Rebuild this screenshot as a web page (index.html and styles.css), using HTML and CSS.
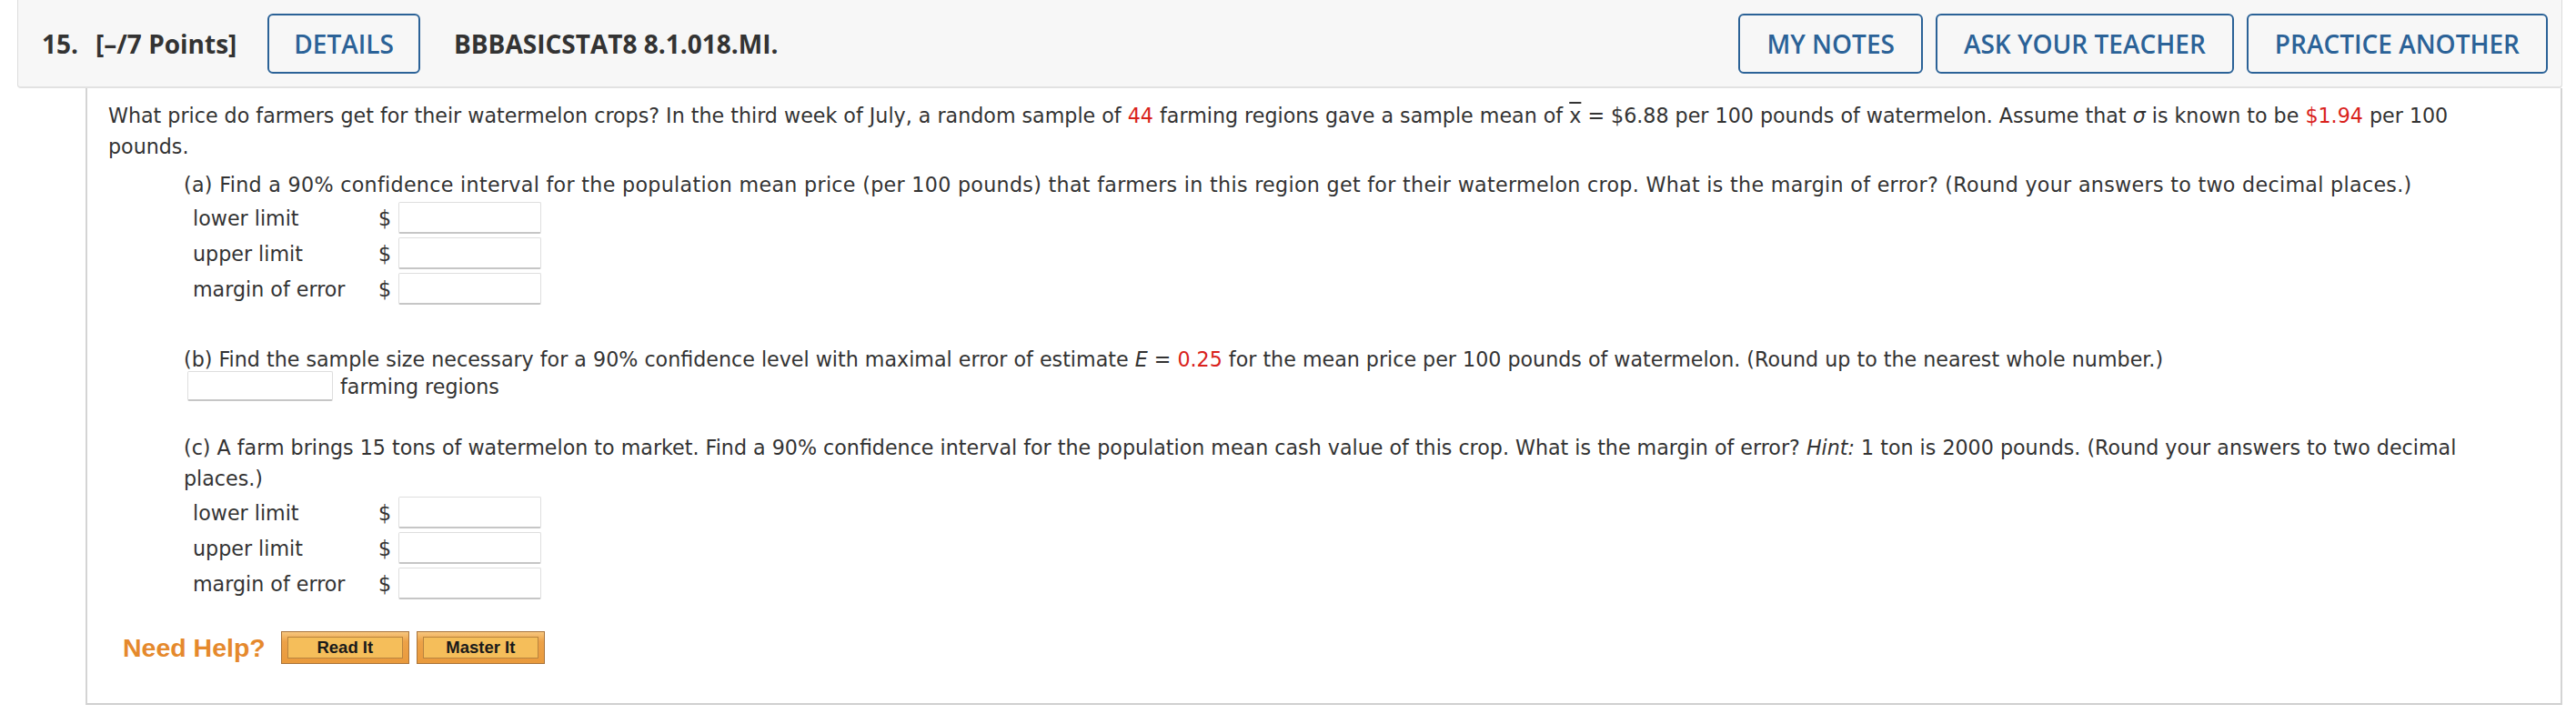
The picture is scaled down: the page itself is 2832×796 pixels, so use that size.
FILE: index.html
```html
<!DOCTYPE html>
<html lang="en">
<head>
<meta charset="utf-8">
<title>Question 15</title>
<link rel="stylesheet" href="styles.css">
</head>
<body>
<div class="question">
  <div class="qhead">
    <span class="qnum">15.</span><span class="qpts">[–/7 Points]</span>
    <span class="hbtn details">DETAILS</span>
    <span class="qid">BBBASICSTAT8 8.1.018.MI.</span>
    <div class="hactions">
      <span class="hbtn">MY NOTES</span>
      <span class="hbtn">ASK YOUR TEACHER</span>
      <span class="hbtn">PRACTICE ANOTHER</span>
    </div>
  </div>
  <div class="qbody">
    <p class="stem"><span>What price do farmers get for their watermelon crops? In the third week of July, a random sample of </span><span class="red">44</span><span> farming regions gave a sample mean of </span><span class="xbar">x</span><span> = $6.88 per 100 pounds of watermelon. Assume that </span><i>σ</i><span> is known to be </span><span class="red">$1.94</span><span> per 100 </span><span>pounds.</span></p>

    <div class="part part-a">
      <p class="qa">(a) Find a 90% confidence interval for the population mean price (per 100 pounds) that farmers in this region get for their watermelon crop. What is the margin of error? (Round your answers to two decimal places.)</p>
      <div class="answers">
        <span class="lbl">lower limit</span><span class="cur">$</span><span class="inp"></span>
        <span class="lbl">upper limit</span><span class="cur">$</span><span class="inp"></span>
        <span class="lbl">margin of error</span><span class="cur">$</span><span class="inp"></span>
      </div>
    </div>

    <div class="part part-b">
      <p><span>(b) Find the sample size necessary for a 90% confidence level with maximal error of estimate </span><i>E</i><span> = </span><span class="red">0.25</span><span> for the mean price per 100 pounds of watermelon. (Round up to the nearest whole number.)</span></p>
      <div class="inline-answer">
        <span class="inp inp-b"></span><span>farming regions</span>
      </div>
    </div>

    <div class="part part-c">
      <p><span>(c) A farm brings 15 tons of watermelon to market. Find a 90% confidence interval for the population mean cash value of this crop. What is the margin of error? </span><i>Hint:</i><span> 1 ton is 2000 pounds. (Round your answers to two decimal </span><span>places.)</span></p>
      <div class="answers">
        <span class="lbl">lower limit</span><span class="cur">$</span><span class="inp"></span>
        <span class="lbl">upper limit</span><span class="cur">$</span><span class="inp"></span>
        <span class="lbl">margin of error</span><span class="cur">$</span><span class="inp"></span>
      </div>
    </div>

    <div class="help">
      <span class="help-label">Need Help?</span>
      <span class="help-btn"><span class="help-inner">Read It</span></span>
      <span class="help-btn"><span class="help-inner">Master It</span></span>
    </div>
  </div>
</div>
</body>
</html>
```

FILE: styles.css
```css
html, body {
  margin: 0;
  padding: 0;
  background: #ffffff;
}

.question {
  margin-left: 19px;
  width: 2798px;
}

.qhead {
  display: flex;
  align-items: center;
  box-sizing: border-box;
  height: 97px;
  padding: 0 15px 0 26px;
  background: #f7f7f7;
  border-left: 1px solid #dcdcdc;
  border-right: 1px solid #dcdcdc;
  border-bottom: 2px solid #e2e2e2;
  border-radius: 0 0 4px 4px;
  font-family: "Open Sans", "Liberation Sans", sans-serif;
  font-size: 28px;
  color: #333333;
}

.qnum {
  font-weight: 700;
  margin-right: 19px;
}

.qpts {
  font-weight: 700;
  margin-right: 34px;
}

.qid {
  font-weight: 700;
  margin-left: 37px;
}

.hbtn {
  display: inline-flex;
  align-items: center;
  justify-content: center;
  box-sizing: border-box;
  height: 66px;
  padding: 0 29px;
  border: 2px solid #2b6297;
  border-radius: 6px;
  color: #2b6297;
  font-weight: 600;
  font-size: 28px;
  white-space: nowrap;
}

.hbtn.details {
  padding: 0 27px;
}

.hactions {
  display: flex;
  gap: 14px;
  margin-left: auto;
}

.qbody {
  margin-left: 75px;
  box-sizing: border-box;
  padding: 13px 52px 43px 23px;
  border-left: 2px solid #d4d4d4;
  border-right: 2px solid #d4d4d4;
  border-bottom: 2px solid #d0d0d0;
  font-family: "DejaVu Sans", Verdana, sans-serif;
  font-size: 22.2px;
  line-height: 34px;
  color: #333333;
}

.qbody p {
  margin: 0;
}

.qbody .qa {
  letter-spacing: 0.31px;
}

.red {
  color: #d9221c;
}

.xbar {
  text-decoration: overline;
}

.part {
  margin-left: 83px;
}

.part-a {
  margin-top: 8px;
}

.part-b {
  margin-top: 41px;
}

.part-c {
  margin-top: 33px;
}

.answers {
  display: grid;
  grid-template-columns: 204px 22px 157px;
  grid-auto-rows: 39px;
  align-items: center;
  margin-left: 10px;
}

.part-c .answers {
  margin-top: 1px;
}

.inp {
  display: block;
  box-sizing: border-box;
  width: 157px;
  height: 35px;
  background: #ffffff;
  border: 1px solid #dedede;
  border-bottom: 2px solid #c6c6c6;
  border-radius: 2px;
}

.inline-answer {
  display: flex;
  align-items: center;
  gap: 8px;
  height: 35px;
  margin-top: -5px;
  margin-left: 4px;
}

.inp-b {
  width: 160px;
  height: 33px;
}

.help {
  display: flex;
  align-items: center;
  margin-top: 33px;
  margin-left: 16px;
  height: 36px;
}

.help-label {
  font-family: "Liberation Sans", Arial, sans-serif;
  font-weight: 700;
  font-size: 28.5px;
  line-height: 36px;
  color: #e5892c;
  margin-right: 17px;
}

.help-btn {
  display: flex;
  box-sizing: border-box;
  width: 141px;
  height: 36px;
  padding: 5px 6px;
  margin-right: 8px;
  border: 1px solid #a9733a;
  background: linear-gradient(#f7c77e 0%, #eda248 30%, #e99a3c 100%);
}

.help-inner {
  flex: 1;
  display: flex;
  align-items: center;
  justify-content: center;
  border: 1px solid #b9843f;
  background: #f5be5a;
  font-family: "Liberation Sans", Arial, sans-serif;
  font-weight: 700;
  font-size: 18.5px;
  color: #1a1a1a;
  line-height: 1;
}
```
